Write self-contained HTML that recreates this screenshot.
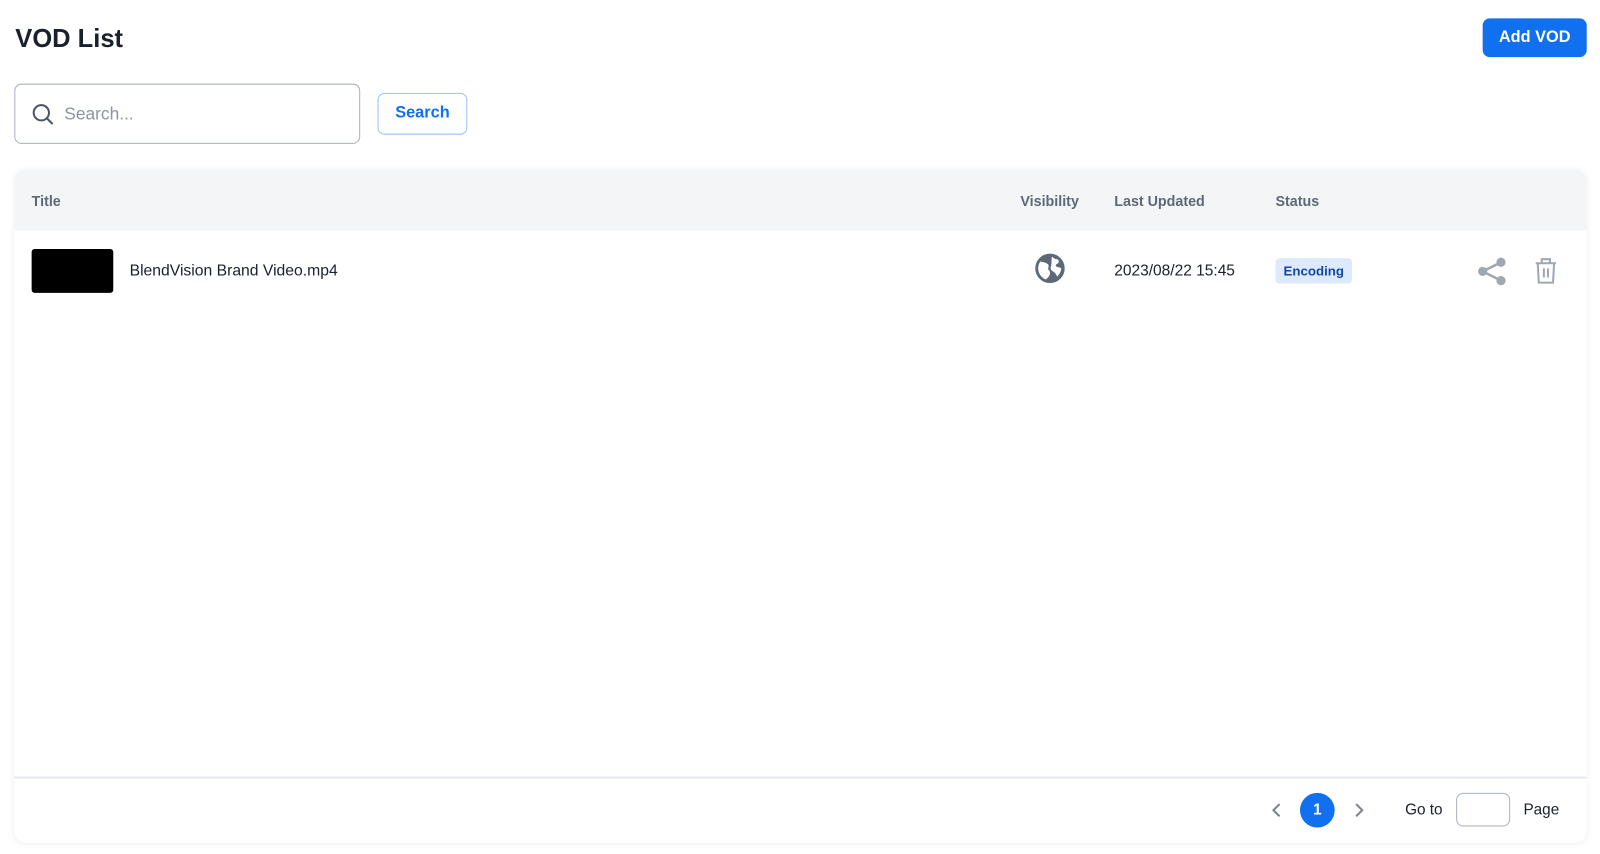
<!DOCTYPE html>
<html><head><style>
*{box-sizing:border-box;margin:0;padding:0}
body{width:1600px;height:854px;background:#fff;font-family:"Liberation Sans",Arial,sans-serif;overflow:hidden;color:#1a202c}
#w{position:absolute;left:0;top:0;width:1568px;height:837px;transform:scale(1.0204);transform-origin:0 0}
.abs{position:absolute}
h1{position:absolute;left:15px;top:24px;font-size:25px;font-weight:bold;color:#1a202c}
.add{left:1453px;top:18px;width:102px;height:38px;background:#1070f0;border-radius:7px;color:#fff;font-weight:bold;font-size:16px;text-align:center;line-height:38px}
.search{left:14px;top:82px;width:339px;height:59px;border:1.5px solid #a9b1bd;border-radius:7px}
.search span{position:absolute;left:48px;top:19px;font-size:17px;color:#8a94a3}
.sbtn{left:370px;top:91px;width:88px;height:41px;border:1.5px solid #9cc0f5;border-radius:7px;color:#1070f0;font-weight:bold;font-size:16px;text-align:center;line-height:38px}
.card{left:14px;top:166px;width:1541px;height:660px;background:#fff;border-radius:12px;box-shadow:0 1px 6px rgba(0,0,0,0.07);overflow:hidden}
.head{left:0;top:0;width:100%;height:60px;background:#f4f5f7}
.th{top:23px;font-size:14px;font-weight:bold;color:#5d6878}
.td{font-size:15px;color:#1a202c}
.badge{left:1236px;top:87px;width:75px;height:25px;background:#dde9fc;border-radius:4px;color:#1248a8;font-weight:bold;font-size:13px;text-align:center;line-height:25px}
.foot{left:0;top:595px;width:100%;height:1.5px;background:#e5e8ec}
.pg{left:1260px;top:611px;width:34px;height:34px;border-radius:50%;background:#1070f0;color:#fff;font-weight:bold;font-size:15px;text-align:center;line-height:34px}
.goin{left:1413px;top:611px;width:53px;height:33px;border:1.5px solid #aab2bd;border-radius:7px}
</style></head><body><div id="w">
<h1>VOD List</h1>
<div class="abs add">Add VOD</div>
<div class="abs search">
<svg class="abs" style="left:16px;top:18px" width="22" height="22" viewBox="0 0 22 22" fill="none" stroke="#4a5568" stroke-width="2"><circle cx="9.5" cy="9.5" r="7.5"/><path d="M15 15l5 5" stroke-linecap="round"/></svg>
<span>Search...</span></div>
<div class="abs sbtn">Search</div>
<div class="abs card">
<div class="abs head"></div>
<div class="abs th" style="left:17px">Title</div>
<div class="abs th" style="left:986px">Visibility</div>
<div class="abs th" style="left:1078px">Last Updated</div>
<div class="abs th" style="left:1236px">Status</div>
<div class="abs" style="left:17px;top:78px;width:80px;height:43px;background:#000;border-radius:3px"></div>
<div class="abs td" style="left:113px;top:91px;font-size:15.4px">BlendVision Brand Video.mp4</div>
<svg class="abs" style="left:1000px;top:82px" width="30" height="30" viewBox="0 0 30 30"><circle cx="15" cy="15" r="14" fill="#5d6878"/><path d="M5 8c3 1 6 1 8 3s-1 4 1 6 1 5-1 7c-1 1-2 2-3 3C5 25 3 20 3 15c0-2 1-5 2-7z" fill="#fff"/><path d="M17 3c1 2 3 3 5 3 2 1 2 3 1 4-2 1-3 2-2 3 2 1 4 1 5 2 0 3-2 6-4 8-1-2-2-4-4-5-2-1-3-3-2-5 1-3 0-6 1-10z" fill="#fff"/><circle cx="15" cy="15" r="13" fill="none" stroke="#5d6878" stroke-width="2.8"/></svg>
<div class="abs td" style="left:1078px;top:91px;font-size:15.2px">2023/08/22 15:45</div>
<div class="abs badge">Encoding</div>
<svg class="abs" style="left:1433px;top:86px" width="30" height="28" viewBox="0 0 30 28"><g fill="#a0a7b1"><circle cx="24" cy="5" r="4.5"/><circle cx="6" cy="14" r="4.5"/><circle cx="24" cy="23" r="4.5"/></g><path d="M24 5L6 14l18 9" stroke="#a0a7b1" stroke-width="2.5" fill="none"/></svg>
<svg class="abs" style="left:1489px;top:86px" width="24" height="27" viewBox="0 0 24 27" fill="none" stroke="#a0a7b1" stroke-width="2"><path d="M2 6h20M8 6V2h8v4M4 6l1 19h14l1-19M10 11v9M14 11v9"/></svg>
<div class="abs foot"></div>
<svg class="abs" style="left:1231px;top:620px" width="12" height="16" viewBox="0 0 12 16"><path d="M9 2L3 8l6 6" stroke="#7a828d" stroke-width="2" fill="none"/></svg>
<div class="abs pg">1</div>
<svg class="abs" style="left:1312px;top:620px" width="12" height="16" viewBox="0 0 12 16"><path d="M3 2l6 6-6 6" stroke="#7a828d" stroke-width="2" fill="none"/></svg>
<div class="abs td" style="left:1363px;top:619px">Go to</div>
<div class="abs goin"></div>
<div class="abs td" style="left:1479px;top:619px">Page</div>
</div>
</div></body></html>
